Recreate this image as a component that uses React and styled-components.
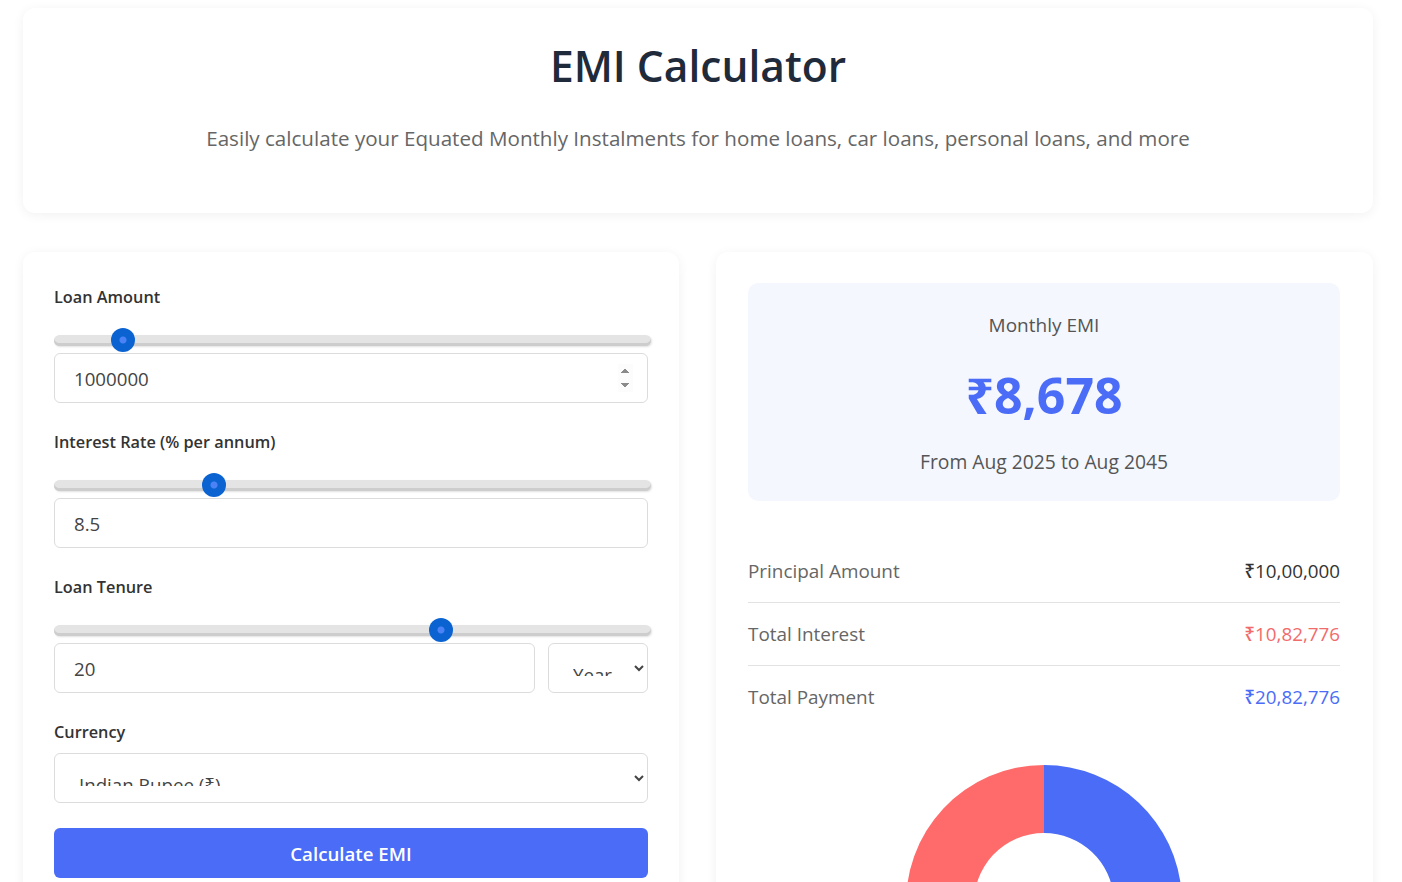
import React, { useState } from "react";
import styled, { createGlobalStyle } from "styled-components";

const GlobalStyle = createGlobalStyle`
  * { box-sizing: border-box; }
  body {
    margin: 0;
    background: #ffffff;
    font-family: "Open Sans", "Noto Sans", sans-serif;
    color: #333;
  }
`;

const formatINR = (n) => "₹" + Math.round(n).toLocaleString("en-IN");

const App = () => {
  const [amount, setAmount] = useState(1000000);
  const [rate, setRate] = useState(8.5);
  const [tenure, setTenure] = useState(20);
  const [unit, setUnit] = useState("year");
  const [currency, setCurrency] = useState("INR");

  const months = unit === "year" ? tenure * 12 : tenure;
  const r = rate / 12 / 100;
  const emi = (amount * r * Math.pow(1 + r, months)) / (Math.pow(1 + r, months) - 1);
  const total = emi * months;
  const interest = total - amount;

  return (
    <>
      <GlobalStyle />
      <Page>
        <HeaderCard>
          <Title>EMI Calculator</Title>
          <Subtitle>
            Easily calculate your Equated Monthly Instalments for home loans, car loans, personal loans, and more
          </Subtitle>
        </HeaderCard>

        <Grid>
          <Card $form>
            <Field>
              <Label>Loan Amount</Label>
              <Range
                type="range"
                min="0"
                max="10000000"
                step="10000"
                value={amount}
                onChange={(e) => setAmount(Number(e.target.value))}
              />
              <NumberInput
                type="number"
                $spinner
                value={amount}
                onChange={(e) => setAmount(Number(e.target.value))}
              />
            </Field>

            <Field>
              <Label>Interest Rate (% per annum)</Label>
              <Range
                type="range"
                min="1"
                max="30"
                step="0.1"
                value={rate}
                onChange={(e) => setRate(Number(e.target.value))}
              />
              <NumberInput
                type="number"
                value={rate}
                onChange={(e) => setRate(Number(e.target.value))}
              />
            </Field>

            <Field>
              <Label>Loan Tenure</Label>
              <Range
                type="range"
                min="1"
                max="30"
                value={tenure}
                onChange={(e) => setTenure(Number(e.target.value))}
              />
              <TenureRow>
                <NumberInput
                  type="number"
                  value={tenure}
                  onChange={(e) => setTenure(Number(e.target.value))}
                />
                <Select value={unit} onChange={(e) => setUnit(e.target.value)}>
                  <option value="year">Year</option>
                  <option value="month">Month</option>
                </Select>
              </TenureRow>
            </Field>

            <Field $last>
              <Label $tight>Currency</Label>
              <Select value={currency} onChange={(e) => setCurrency(e.target.value)}>
                <option value="INR">Indian Rupee (₹)</option>
                <option value="USD">US Dollar ($)</option>
                <option value="EUR">Euro (€)</option>
              </Select>
            </Field>

            <CalcButton type="button">Calculate EMI</CalcButton>
          </Card>

          <Card>
            <EmiBox>
              <EmiTitle>Monthly EMI</EmiTitle>
              <EmiAmount>{formatINR(emi)}</EmiAmount>
              <EmiPeriod>From Aug 2025 to Aug 2045</EmiPeriod>
            </EmiBox>

            <Summary>
              <SummaryRow>
                <RowLabel>Principal Amount</RowLabel>
                <RowValue>{formatINR(amount)}</RowValue>
              </SummaryRow>
              <SummaryRow>
                <RowLabel>Total Interest</RowLabel>
                <RowValue $color="#f26b6b">{formatINR(interest)}</RowValue>
              </SummaryRow>
              <SummaryRow>
                <RowLabel>Total Payment</RowLabel>
                <RowValue $color="#4a6cf7">{formatINR(total)}</RowValue>
              </SummaryRow>
            </Summary>

            <ChartWrap>
              <Donut principal={amount} interest={interest} />
            </ChartWrap>
          </Card>
        </Grid>
      </Page>
    </>
  );
};

const Donut = ({ principal, interest }) => {
  const R = 138;
  const rIn = 70;
  const c = 140;
  const frac = principal / (principal + interest);
  const point = (angle, rad) => {
    const a = (angle - 90) * (Math.PI / 180);
    return [c + rad * Math.cos(a), c + rad * Math.sin(a)];
  };
  const arc = (start, end) => {
    const large = end - start > 180 ? 1 : 0;
    const [x1, y1] = point(start, R);
    const [x2, y2] = point(end, R);
    const [x3, y3] = point(end, rIn);
    const [x4, y4] = point(start, rIn);
    return `M${x1} ${y1} A${R} ${R} 0 ${large} 1 ${x2} ${y2} L${x3} ${y3} A${rIn} ${rIn} 0 ${large} 0 ${x4} ${y4} Z`;
  };
  const split = frac * 360;
  return (
    <svg width="280" height="280" viewBox="0 0 280 280">
      <path d={arc(0, split)} fill="#4a6cf7" />
      <path d={arc(split, 360)} fill="#ff6b6b" />
    </svg>
  );
};

const Page = styled.div`
  padding: 8px 29px 0 23px;
`;

const HeaderCard = styled.header`
  background: #fff;
  border-radius: 12px;
  box-shadow: 0 2px 12px rgba(0, 0, 0, 0.06);
  padding: 33px 32px 61px;
  text-align: center;
`;

const Title = styled.h1`
  margin: 0;
  font-size: 42.5px;
  line-height: 50px;
  font-weight: 600;
  color: #1f2a3a;
`;

const Subtitle = styled.p`
  margin: 33px 0 0;
  font-size: 20.6px;
  line-height: 28px;
  color: #666;
`;

const Grid = styled.div`
  display: grid;
  grid-template-columns: 656px 657px;
  gap: 37px;
  margin-top: 39px;
`;

const Card = styled.section`
  background: #fff;
  border-radius: 12px;
  box-shadow: 0 2px 12px rgba(0, 0, 0, 0.06);
  padding: ${(p) => (p.$form ? "33px 31px 31px" : "31px 33px 31px 32px")};
  min-height: 700px;
`;

const Field = styled.div`
  margin-bottom: ${(p) => (p.$last ? "25px" : "27px")};
`;

const Label = styled.label`
  display: block;
  font-size: 16.3px;
  line-height: 24px;
  font-weight: 600;
  color: #333;
  margin-bottom: ${(p) => (p.$tight ? "9px" : "19px")};
`;

const Range = styled.input`
  -webkit-appearance: none;
  appearance: none;
  display: block;
  width: calc(100% + 3px);
  height: 24px;
  margin: 0 0 1px;
  background: transparent;

  &::-webkit-slider-runnable-track {
    height: 11px;
    border-radius: 6px;
    background: #e4e4e4;
    box-shadow: inset 0 -3px 0 #cdcdcd, 1px 1px 2px rgba(0, 0, 0, 0.12);
  }

  &::-webkit-slider-thumb {
    -webkit-appearance: none;
    width: 24px;
    height: 24px;
    margin-top: -7px;
    border-radius: 50%;
    background: radial-gradient(circle, #4b82f5 0 3px, #0b63d2 4px);
    cursor: pointer;
  }
`;

const NumberInput = styled.input`
  display: block;
  width: 100%;
  height: 50px;
  padding: 0 14px 0 19px;
  border: 1px solid #dcdcdc;
  border-radius: 6px;
  font-family: inherit;
  font-size: 18.7px;
  color: #444;
  background: #fff;
  outline: none;

  &::-webkit-inner-spin-button {
    opacity: ${(p) => (p.$spinner ? 1 : 0)};
    height: 28px;
    margin: 0;
  }
`;

const TenureRow = styled.div`
  display: grid;
  grid-template-columns: 1fr 100px;
  gap: 13px;
`;

const Select = styled.select`
  display: block;
  width: 100%;
  height: 50px;
  padding: 17px 4px 16px 20px;
  border: 1px solid #dcdcdc;
  border-radius: 6px;
  font-family: inherit;
  font-size: 18.7px;
  color: #444;
  background: #fff;
  outline: none;
`;

const CalcButton = styled.button`
  display: block;
  width: 100%;
  height: 50px;
  border: none;
  border-radius: 6px;
  background: #4a6cf7;
  color: #fff;
  font-family: inherit;
  font-size: 18.7px;
  font-weight: 600;
  cursor: pointer;
`;

const EmiBox = styled.div`
  background: #f4f7fe;
  border-radius: 10px;
  padding: 29px 20px 26px;
  text-align: center;
`;

const EmiTitle = styled.div`
  font-size: 19px;
  line-height: 26px;
  color: #555;
`;

const EmiAmount = styled.div`
  margin-top: 28px;
  font-size: 50px;
  line-height: 58px;
  font-weight: 700;
  color: #4a6cf7;
`;

const EmiPeriod = styled.div`
  margin-top: 25px;
  font-size: 19.3px;
  line-height: 26px;
  color: #555;
`;

const Summary = styled.div`
  margin-top: 39px;
`;

const SummaryRow = styled.div`
  display: flex;
  justify-content: space-between;
  align-items: center;
  padding: 19px 0;
  border-bottom: 1px solid #e2e2e2;

  &:last-child {
    border-bottom: none;
  }
`;

const RowLabel = styled.span`
  font-size: 18.9px;
  line-height: 24px;
  color: #666;
`;

const RowValue = styled.span`
  font-size: 18.8px;
  line-height: 24px;
  font-weight: 500;
  color: ${(p) => p.$color || "#333"};
`;

const ChartWrap = styled.div`
  display: flex;
  justify-content: center;
  margin-top: 35px;
`;

export default App;
